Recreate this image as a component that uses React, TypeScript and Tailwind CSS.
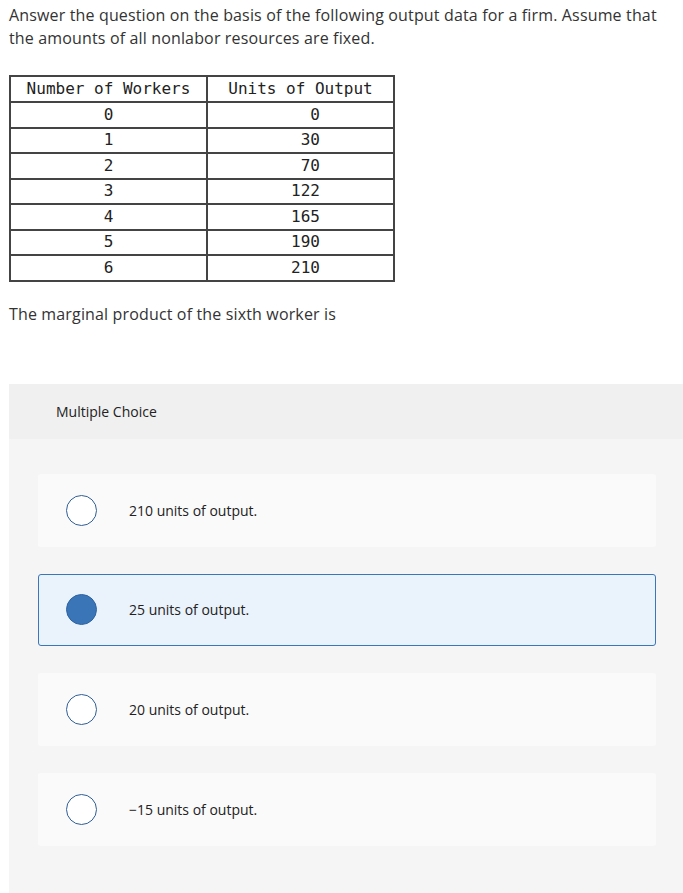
const rows: [string, string][] = [
  ["0", "\u00a0\u00a00"],
  ["1", "\u00a030"],
  ["2", "\u00a070"],
  ["3", "122"],
  ["4", "165"],
  ["5", "190"],
  ["6", "210"],
];

const options = [
  { label: "210 units of output.", selected: false },
  { label: "25 units of output.", selected: true },
  { label: "20 units of output.", selected: false },
  { label: "\u221215 units of output.", selected: false },
];

const Radio = ({ selected }: { selected: boolean }) => (
  <span
    className={
      selected
        ? "w-[31px] h-[31px] rounded-full bg-[#3a75b8] border border-[#2f64a3] shrink-0"
        : "w-[31px] h-[31px] rounded-full bg-white border-[1.5px] border-[#2f5f96] shrink-0"
    }
  />
);

export default function App() {
  return (
    <div className="min-h-[893px] bg-white pl-[9px] text-[#333] font-['Open_Sans',sans-serif]">
      <p className="pt-[4px] text-[16px] leading-[23px] tracking-[0.15px] pr-[16px]">
        Answer the question on the basis of the following output data for a firm. Assume that
        the amounts of all nonlabor resources are fixed.
      </p>

      <table className="mt-[25px] border-collapse border-2 border-[#444] font-['DejaVu_Sans_Mono',monospace] text-[16px] text-[#222]">
        <thead>
          <tr className="h-[26px]">
            <th className="w-[197px] border-2 border-[#444] font-normal leading-[20px]">Number of Workers</th>
            <th className="w-[187px] border-2 border-[#444] font-normal leading-[20px]">Units of Output</th>
          </tr>
        </thead>
        <tbody>
          {rows.map(([w, u]) => (
            <tr key={w} className="h-[25.5px] leading-[20px]">
              <td className="border-2 border-[#444] text-center">{w}</td>
              <td className="border-2 border-[#444] text-center pl-[10px]">{u}</td>
            </tr>
          ))}
        </tbody>
      </table>

      <p className="mt-[21px] text-[16px] leading-[23px] tracking-[0.15px]">The marginal product of the sixth worker is</p>

      <div className="mt-[58px] bg-[#f5f5f5]">
        <div className="h-[55px] bg-[#f0f0f0] flex items-center pl-[47px] text-[14px] text-[#222]">
          Multiple Choice
        </div>
        <div className="pt-[35px] pb-[48px] pl-[29px] pr-[27px] flex flex-col gap-[27px]">
          {options.map((o) => (
            <div
              key={o.label}
              className={
                o.selected
                  ? "h-[72px] rounded-[3px] border border-[#3a77b8] bg-[#eaf2fb] flex items-center pl-[27px]"
                  : "h-[73px] rounded-[3px] bg-[#fafafa] flex items-center pl-[28px]"
              }
            >
              <Radio selected={o.selected} />
              <span className="ml-[32px] text-[14px] text-[#222]">{o.label}</span>
            </div>
          ))}
        </div>
      </div>
    </div>
  );
}
